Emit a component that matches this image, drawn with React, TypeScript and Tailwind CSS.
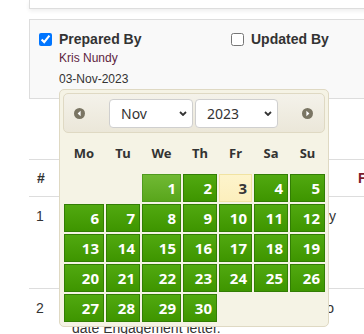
import React from "react";

const days = Array.from({ length: 30 }, (_, i) => i + 1);

const CircleArrow = ({ dir }: { dir: "w" | "e" }) => (
  <svg width="11" height="11" viewBox="0 0 11 11">
    <circle cx="5.5" cy="5.5" r="5.5" fill="#7a7563" />
    {dir === "w" ? (
      <path d="M6.6 2.8 L3.6 5.5 L6.6 8.2 Z" fill="#fff" />
    ) : (
      <path d="M4.4 2.8 L7.4 5.5 L4.4 8.2 Z" fill="#fff" />
    )}
  </svg>
);

const Chevron = () => (
  <svg width="8" height="5" viewBox="0 0 8 5">
    <path d="M1 1 L4 4 L7 1" fill="none" stroke="#333" strokeWidth="1.8" />
  </svg>
);

const SelectBox = ({ value, width }: { value: string; width: string }) => (
  <div
    className={`flex h-[29px] items-center justify-between rounded-[4px] border border-[#cfcfcf] bg-white pl-[11px] pr-[5px] text-[14px] text-[#333] ${width}`}
  >
    <span>{value}</span>
    <Chevron />
  </div>
);

const DatePicker = () => {
  const lead = [null, null];
  const cells = [...lead, ...days];

  return (
    <div
      className="absolute left-[59px] top-[89px] h-[238px] w-[270px] rounded-[5px] border border-[#dfd9c3] bg-[#f5f3e5] p-[3px]"
      style={{ fontFamily: '"Noto Sans", sans-serif' }}
    >
      <div className="flex h-[40px] items-center rounded-[5px] border border-[#dfd9c3] bg-linear-to-b from-[#f4f2ea] to-[#ebe7d9]">
        <div className="ml-[10px] flex">
          <CircleArrow dir="w" />
        </div>
        <div className="ml-[24px]">
          <SelectBox value="Nov" width="w-[84px]" />
        </div>
        <div className="ml-[2px]">
          <SelectBox value="2023" width="w-[83px]" />
        </div>
        <div className="ml-[24px] flex">
          <CircleArrow dir="e" />
        </div>
      </div>

      <div className="ml-[1px] mt-[3px] grid h-[35px] grid-cols-[40px_34px_39px_34px_33px_34px_35px] items-center gap-x-[2px] text-center text-[13px] font-bold text-[#333]">
        {["Mo", "Tu", "We", "Th", "Fr", "Sa", "Su"].map((d) => (
          <span key={d}>{d}</span>
        ))}
      </div>

      <div className="ml-[1px] mt-[3px] grid grid-cols-[40px_34px_39px_34px_33px_34px_35px] gap-x-[2px] gap-y-[2px]">
        {cells.map((d, i) => {
          if (d === null) return <div key={`e${i}`} className="h-[28px]" />;
          let tone =
            "border-[#327e04] from-[#51a910] to-[#3e9500] text-white";
          if (d === 1) tone = "border-[#4f9a1e] from-[#70b933] to-[#59a61b] text-white";
          if (d === 3) tone = "border-[#f1e3a2] from-[#fdf4cc] to-[#fcefbd] text-[#363636]";
          return (
            <div
              key={d}
              className={`h-[28px] border bg-linear-to-b pr-[4px] text-right text-[15px] font-bold leading-[26px] ${tone}`}
            >
              {d}
            </div>
          );
        })}
      </div>
    </div>
  );
};

export default function App() {
  return (
    <div
      className="relative h-[334px] w-[364px] overflow-hidden bg-white text-[#333]"
      style={{ fontFamily: '"Liberation Sans", Arial, sans-serif' }}
    >
      <div className="ml-[29px] h-[9px] w-[400px] border-b border-l border-[#ddd] shadow-[0_2px_4px_rgba(0,0,0,0.07)]" />

      <div className="ml-[29px] mt-[10px] flex h-[80px] w-[400px] border border-[#ddd] bg-[#f9f9f9] pl-[9px] pt-[9px]">
        <div className="w-[192px]">
          <div className="flex h-[20px] items-center gap-[7px]">
            <input type="checkbox" defaultChecked className="m-0 h-[13px] w-[13px]" />
            <span className="text-[14px] font-bold">Prepared By</span>
          </div>
          <div className="-mt-[1px] pl-[20px] text-[12px] leading-[21px] text-[#5e1f3f]">Kris Nundy</div>
          <div className="pl-[20px] text-[12px] leading-[21px]">03-Nov-2023</div>
        </div>
        <div>
          <div className="flex h-[20px] items-center gap-[7px]">
            <input type="checkbox" className="m-0 h-[13px] w-[13px]" />
            <span className="text-[14px] font-bold">Updated By</span>
          </div>
        </div>
      </div>

      <div className="ml-[29px] mt-[60px] w-[400px] border-t border-[#ddd] text-[14px]">
        <div className="flex h-[37px] items-center border-b border-[#ddd] font-bold">
          <div className="w-[43px] pl-[8px]">#</div>
          <div className="w-[286px]" />
          <div className="text-[#7d1c2c]">From</div>
        </div>

        <div className="flex h-[92px] border-b border-[#ddd] pt-[9px] leading-[20px]">
          <div className="w-[43px] pl-[7px]">1</div>
          <div className="w-[264px] whitespace-nowrap text-right">Letter reviewed by</div>
        </div>

        <div className="flex pt-[9px] leading-[20px]">
          <div className="w-[43px] pl-[7px]">2</div>
          <div className="w-[262px] whitespace-nowrap">
            <div className="text-right">Signed and sent to</div>
            <div>date Engagement letter.</div>
          </div>
        </div>
      </div>

      <DatePicker />
    </div>
  );
}
